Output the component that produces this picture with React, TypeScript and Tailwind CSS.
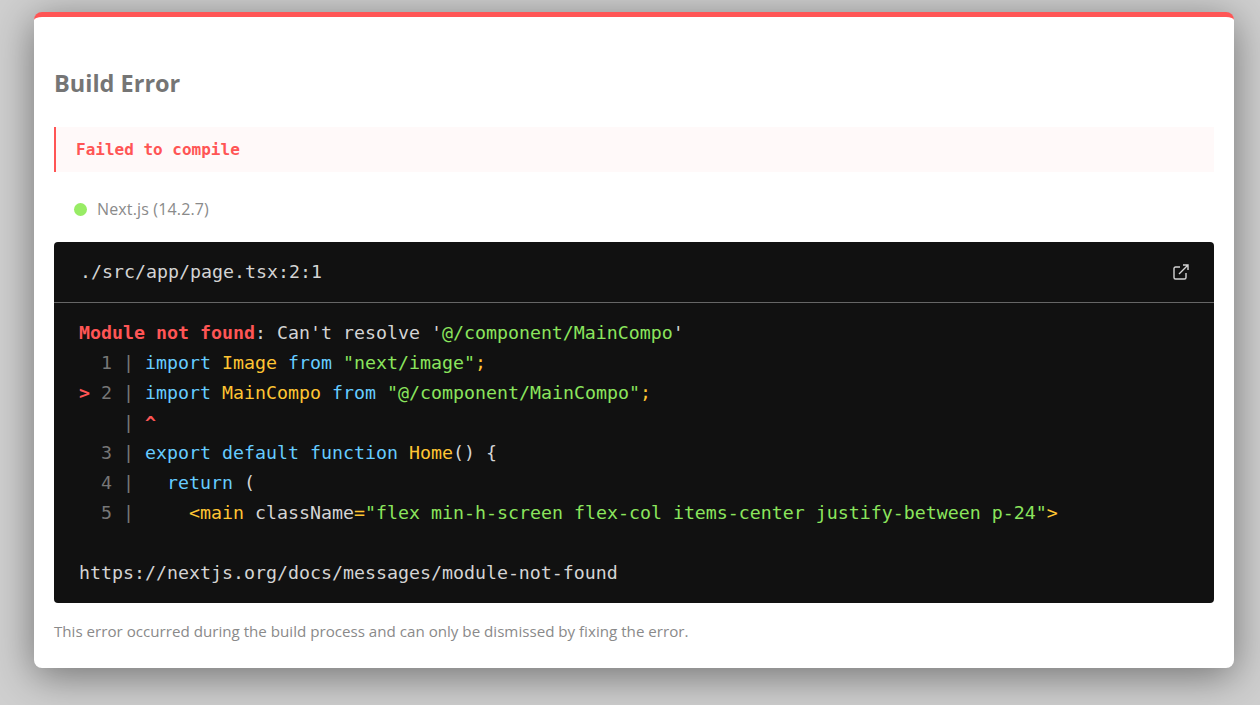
const sans = "font-['Open_Sans','Noto_Sans',sans-serif]";
const red = "text-[#ff5555]";
const blue = "text-[#66ccff]";
const yellow = "text-[#ffc533]";
const green = "text-[#8be55d]";
const lineNo = "text-[#777777]";

function Gutter({ n, mark }: { n?: string; mark?: boolean }) {
  return (
    <>
      {mark ? <span className={`${red} font-bold`}>&gt;</span> : " "} <span className={lineNo}>{n ?? " "} |</span>{" "}
    </>
  );
}

export default function App() {
  return (
    <div className="h-[705px] overflow-hidden bg-[#cfcfcf] pt-3 pl-[34px]">
      <div className="h-[656px] w-[1200px] overflow-hidden rounded-lg border-t-[5px] border-[#ff5555] bg-white px-5 shadow-[0_8px_40px_rgba(0,0,0,0.45)]">
        <h1 className={`${sans} mt-[47px] text-[23.5px] leading-[38px] font-bold text-[#757575]`}>Build Error</h1>
        <div className="mt-[25px] flex h-[45px] items-center border-l-2 border-[#ff5555] bg-[#fff9f9] pl-5">
          <p className={`font-['DejaVu_Sans_Mono',monospace] text-[16px] font-bold ${red}`}>Failed to compile</p>
        </div>
        <div className={`${sans} mt-[27px] flex h-[20px] items-center pl-5 text-[16px] tracking-[0.15px] text-[#8a8a8a]`}>
          <span className="mr-[10px] h-[13px] w-[13px] rounded-full bg-[#98ec65]" />
          Next.js (14.2.7)
        </div>
        <div className="mt-[23px] h-[361px] overflow-hidden rounded bg-[#111111] font-['DejaVu_Sans_Mono',monospace] text-[18.27px] text-[#d4d4d4]">
          <div className="flex h-[61px] items-center justify-between border-b border-[#666666] pr-[25px] pl-[26px]">
            <p>./src/app/page.tsx:2:1</p>
            <svg width="16" height="16" viewBox="0 0 16 16" fill="none" stroke="#d4d4d4" strokeWidth="1.4">
              <path d="M7 3H2.5A1.5 1.5 0 0 0 1 4.5v9A1.5 1.5 0 0 0 2.5 15h9a1.5 1.5 0 0 0 1.5-1.5V9" />
              <path d="M6 10 15 1M10 1h5v5" />
            </svg>
          </div>
          <pre className="pt-[15px] pl-[25px] font-['DejaVu_Sans_Mono',monospace] leading-[30px]">
            <span className={`${red} font-bold`}>Module not found</span>: Can't resolve '<span className={green}>@/component/MainCompo</span>'
            {"\n"}
            <Gutter n="1" /><span className={blue}>import</span> <span className={yellow}>Image</span> <span className={blue}>from</span> <span className={green}>"next/image"</span><span className={yellow}>;</span>
            {"\n"}
            <Gutter n="2" mark /><span className={blue}>import</span> <span className={yellow}>MainCompo</span> <span className={blue}>from</span> <span className={green}>"@/component/MainCompo"</span><span className={yellow}>;</span>
            {"\n"}
            <Gutter /><span className={`${red} font-bold`}>^</span>
            {"\n"}
            <Gutter n="3" /><span className={blue}>export default function</span> <span className={yellow}>Home</span>() {"{"}
            {"\n"}
            <Gutter n="4" />  <span className={blue}>return</span> (
            {"\n"}
            <Gutter n="5" />    <span className={yellow}>&lt;main</span> <span>className</span><span className={yellow}>=</span><span className={green}>"flex min-h-screen flex-col items-center justify-between p-24"</span><span className={yellow}>&gt;</span>
            {"\n\n"}
            https://nextjs.org/docs/messages/module-not-found
          </pre>
        </div>
        <p className={`${sans} mt-[18px] text-[15.15px] leading-[20px] text-[#8a8a8a]`}>
          This error occurred during the build process and can only be dismissed by fixing the error.
        </p>
      </div>
    </div>
  );
}
